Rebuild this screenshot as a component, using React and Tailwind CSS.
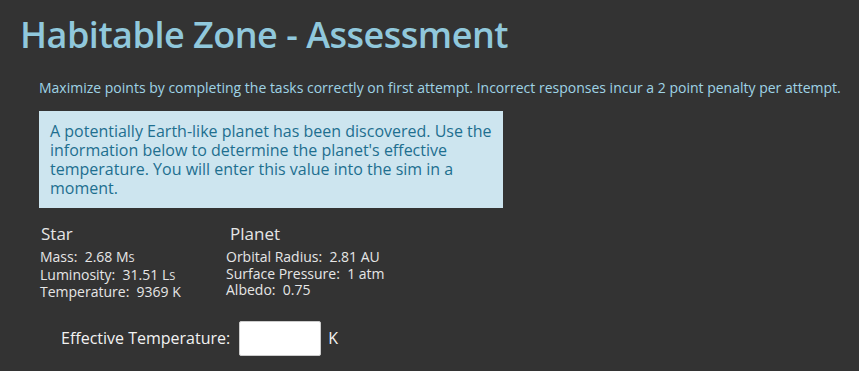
import React from 'react';

const Row = ({ label, value, unit }) => (
  <p className="leading-[16.5px]">
    {label}:&nbsp; {value}
    {unit && <span className="text-[11px]">{unit}</span>}
  </p>
);

const App = () => {
  return (
    <div
      className="w-[859px] h-[371px] overflow-hidden bg-[#333333]"
      style={{ fontFamily: "'Open Sans', sans-serif" }}
    >
      <h1 className="pl-[20px] pt-[11px] text-[36px] leading-[48px] font-semibold text-[#90c8dc] tracking-[-0.5px]">
        Habitable Zone - Assessment
      </h1>

      <p className="pl-[39px] mt-[20px] text-[14px] leading-[18px] text-[#9fd3e6]">
        Maximize points by completing the tasks correctly on first attempt. Incorrect responses incur a 2 point penalty per attempt.
      </p>

      <div className="ml-[39px] mt-[14px] w-[464px] bg-[#cde5ef] px-[11px] pt-[11px] pb-[10px] text-[16px] leading-[19px] text-[#1e6f8f]">
        A potentially Earth-like planet has been discovered. Use the information below to determine the planet's effective temperature. You will enter this value into the sim in a moment.
      </div>

      <div className="flex mt-[16px] pl-[40px] text-[#e6e6e6]">
        <div className="w-[186px]">
          <h2 className="text-[17px] leading-[20px] mb-[5px] pl-[1px]">Star</h2>
          <div className="text-[14px]">
            <Row label="Mass" value="2.68 M" unit="S" />
            <Row label="Luminosity" value="31.51 L" unit="S" />
            <Row label="Temperature" value="9369 K" />
          </div>
        </div>
        <div>
          <h2 className="text-[17px] leading-[20px] mb-[5px] pl-[4px]">Planet</h2>
          <div className="text-[14px]">
            <Row label="Orbital Radius" value="2.81 AU" />
            <Row label="Surface Pressure" value="1 atm" />
            <Row label="Albedo" value="0.75" />
          </div>
        </div>
      </div>

      <div className="flex items-center mt-[20px] pl-[61px] text-[16px] text-[#f2f2f2]">
        <span>Effective Temperature:</span>
        <input
          type="text"
          className="ml-[9px] w-[82px] h-[35px] bg-white border border-[#cccccc] rounded-[2px] outline-none"
        />
        <span className="ml-[7px]">K</span>
      </div>
    </div>
  );
};

export default App;
